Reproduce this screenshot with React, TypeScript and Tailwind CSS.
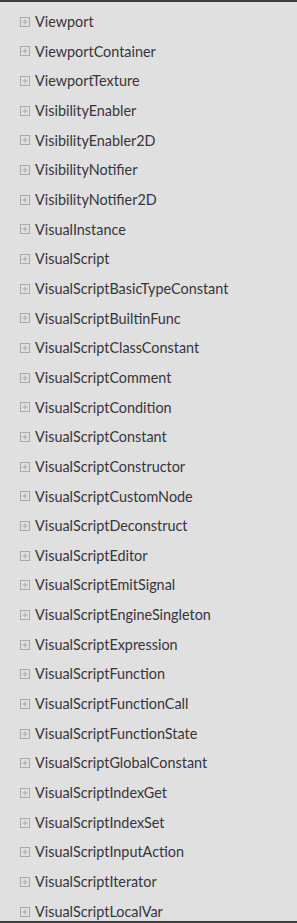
import React from "react";

const items = [
  "Viewport",
  "ViewportContainer",
  "ViewportTexture",
  "VisibilityEnabler",
  "VisibilityEnabler2D",
  "VisibilityNotifier",
  "VisibilityNotifier2D",
  "VisualInstance",
  "VisualScript",
  "VisualScriptBasicTypeConstant",
  "VisualScriptBuiltinFunc",
  "VisualScriptClassConstant",
  "VisualScriptComment",
  "VisualScriptCondition",
  "VisualScriptConstant",
  "VisualScriptConstructor",
  "VisualScriptCustomNode",
  "VisualScriptDeconstruct",
  "VisualScriptEditor",
  "VisualScriptEmitSignal",
  "VisualScriptEngineSingleton",
  "VisualScriptExpression",
  "VisualScriptFunction",
  "VisualScriptFunctionCall",
  "VisualScriptFunctionState",
  "VisualScriptGlobalConstant",
  "VisualScriptIndexGet",
  "VisualScriptIndexSet",
  "VisualScriptInputAction",
  "VisualScriptIterator",
  "VisualScriptLocalVar",
];

function PlusBox() {
  return (
    <svg width="10" height="10" viewBox="0 0 10 10" className="shrink-0">
      <rect x="0.5" y="0.5" width="9" height="9" fill="none" stroke="#a8a8a8" strokeWidth="1" />
      <path d="M5 2.5V7.5M2.5 5H7.5" stroke="#a8a8a8" strokeWidth="1" />
    </svg>
  );
}

export default function App() {
  return (
    <div className="w-[297px] h-[923px] bg-[#e0e0e0] border-t-2 border-b-2 border-[#3d3d3d] overflow-hidden" style={{ fontFamily: "Lato, 'Open Sans', sans-serif" }}>
      <ul className="pt-[5px]">
        {items.map((t) => (
          <li key={t} className="h-[29.67px] flex items-center pl-[20px] gap-[5px] text-[14.4px] text-[#36363c]">
            <PlusBox />
            <span>{t}</span>
          </li>
        ))}
      </ul>
    </div>
  );
}
